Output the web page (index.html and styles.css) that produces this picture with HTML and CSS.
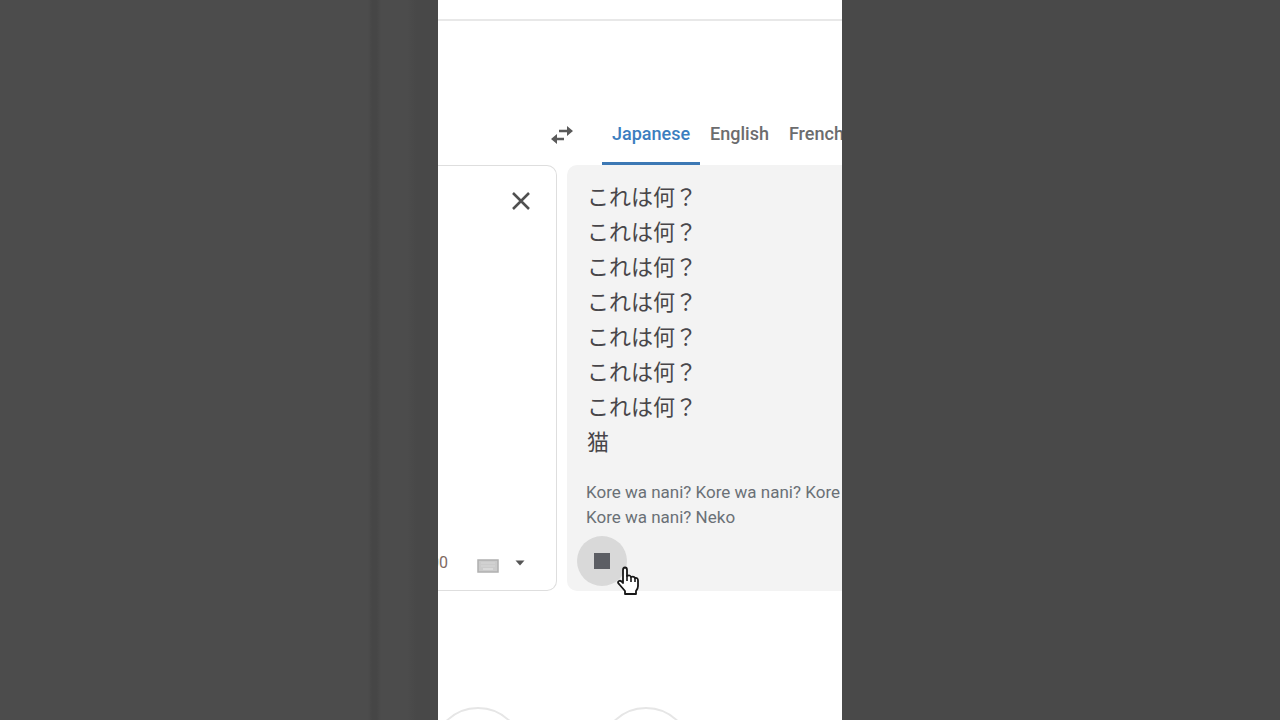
FILE: index.html
```html
<!DOCTYPE html>
<html lang="en">
<head>
<meta charset="utf-8">
<meta name="viewport" content="width=device-width, initial-scale=1">
<title>Translate</title>
<link rel="stylesheet" href="styles.css">
</head>
<body>
<div class="stage">
  <div class="backdrop backdrop-left"></div>
  <main class="app">
    <header class="topbar"></header>
    <div class="languages">
      <button class="icon-button swap" type="button" aria-label="Swap languages">
        <svg width="24" height="18" viewBox="0 0 24 18" fill="none" stroke="#5a5a5a" stroke-width="2.5"><path d="M9 5h9M14 13H6"/><path d="M17 0l6 5-6 5zM7 8l-6 5 6 5z" fill="#5a5a5a" stroke="none"/></svg>
      </button>
      <nav class="tabs" aria-label="Target language">
        <button class="tab tab-active" type="button">Japanese</button>
        <button class="tab" type="button">English</button>
        <button class="tab" type="button">French</button>
      </nav>
    </div>
    <div class="panels">
      <section class="source">
        <button class="icon-button clear" type="button" aria-label="Clear text">
          <svg width="20" height="20" viewBox="0 0 20 20" fill="none" stroke="#505050" stroke-width="2.500"><path d="M2 2l16 16M18 2L2 18"/></svg>
        </button>
        <div class="source-tools">
          <span class="count">00</span>
          <button class="icon-button" type="button" aria-label="Keyboard">
            <svg width="22" height="14" viewBox="0 0 22 14"><rect x="1" y="1" width="20" height="12" fill="#cbcbcb" stroke="#b0b0b0" stroke-width="1.500"/><path d="M4 4h14M4 7h14" stroke="#d4d4d4" stroke-width="1.500"/><path d="M6 10h10" stroke="#dedede" stroke-width="1.500"/></svg>
          </button>
          <button class="icon-button caret" type="button" aria-label="Input tools">
            <svg width="10" height="6" viewBox="0 0 10 6"><path d="M.5.5h9L5 5.500z" fill="#555"/></svg>
          </button>
        </div>
      </section>
      <section class="target">
        <div class="translation" lang="ja">これは何？<br>これは何？<br>これは何？<br>これは何？<br>これは何？<br>これは何？<br>これは何？<br>猫</div>
        <div class="romaji">Kore wa nani? Kore wa nani? Kore<br>Kore wa nani? Neko</div>
        <div class="playback">
          <button class="stop" type="button" aria-label="Stop"><span class="stop-mark"></span></button>
          <svg class="pointer" width="24" height="30" viewBox="0 0 24 30"><path d="M7 17V4q0-2.500 2-2.500T11 4v6q3-1.500 4 1 3-1 4 1 3-.5 3 2.500V20q0 3-2 5v3H9v-3l-6-7q-2-2 0-3t4 2z" fill="#fff" stroke="#181818" stroke-width="1.800" stroke-linejoin="round"/><path d="M11 9v6M15 11v5M19 12v4" stroke="#181818" stroke-width="1.600"/></svg>
        </div>
      </section>
    </div>
    <div class="shortcuts">
      <button class="shortcut" type="button" aria-label="History"></button>
      <button class="shortcut" type="button" aria-label="Saved"></button>
    </div>
  </main>
  <div class="backdrop"></div>
</div>
</body>
</html>
```
FILE: styles.css
```css
* { box-sizing: border-box; }
body {
  margin: 0;
  font-family: Roboto, "Noto Sans CJK JP", sans-serif;
  background: #494949;
}
button { font: inherit; border: 0; padding: 0; background: none; cursor: pointer; }
svg { display: block; }
.stage {
  display: grid;
  grid-template-columns: 438fr 404fr 438fr;
  height: 100vh;
  overflow: hidden;
}
.backdrop { background: #494949; }
.backdrop-left {
  background: linear-gradient(90deg, #4c4c4c 0 84%, #464646 85% 86%, #4c4c4c 87% 93%, #484848 95%);
}
.app {
  display: flex;
  flex-direction: column;
  min-width: 0;
  overflow: hidden;
  background: #fff;
}
.topbar { flex: none; height: 21px; border-bottom: 2px solid #e8e8e8; }
.languages {
  flex: none;
  display: flex;
  align-items: flex-end;
  margin-top: 91px;
  padding-left: 112px;
}
.swap { padding-bottom: 21px; margin-right: 28px; }
.tabs { display: flex; }
.tab {
  padding: 0 10px 6px;
  font-size: 18px;
  font-weight: 500;
  line-height: 44px;
  color: #6c6c6e;
  border-bottom: 3px solid transparent;
}
.tab-active { color: #3c7ebf; border-color: #3c78b4; }
.panels { flex: none; display: flex; gap: 10px; }
.source {
  flex: none;
  width: 119px;
  display: flex;
  flex-direction: column;
  justify-content: space-between;
  align-items: flex-end;
  padding: 25px 25px 15px 0;
  border: 1px solid #dedede;
  border-left: 0;
  border-radius: 0 10px 10px 0;
}
.source-tools {
  display: flex;
  align-items: center;
  justify-content: flex-end;
  padding-right: 6px;
}
.count { margin-right: 29px; font-size: 16px; line-height: 24px; color: #806a62; }
.source-tools .icon-button { margin-top: 6px; }
.source-tools .caret { margin: 0 0 0 16px; }
.target {
  flex: 1;
  min-width: 0;
  padding: 13px 0 5px 10px;
  background: #f3f3f3;
  border-radius: 10px 0 0 10px;
}
.translation {
  padding-left: 10px;
  font-family: "Noto Sans CJK JP", sans-serif;
  font-size: 22px;
  line-height: 35px;
  color: #48464a;
}
.romaji {
  margin: 22px 0 6px;
  padding-left: 9px;
  font-size: 17px;
  line-height: 25px;
  white-space: nowrap;
  color: #6a7076;
}
.playback { position: relative; width: 50px; }
.stop {
  display: grid;
  place-items: center;
  width: 50px;
  height: 50px;
  border-radius: 50%;
  background: #d9d9d9;
}
.stop-mark { width: 16px; height: 16px; background: #5c5e64; }
.pointer { position: absolute; left: 39px; top: 30px; }
.shortcuts {
  flex: none;
  display: flex;
  gap: 76px;
  margin: 116px 0 0 -6px;
}
.shortcut {
  flex: none;
  width: 92px;
  height: 92px;
  border: 2px solid #e6e6e6;
  border-radius: 50%;
}
```
